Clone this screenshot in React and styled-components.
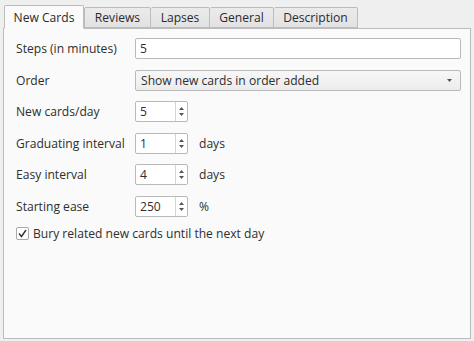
import React from "react";
import styled, { createGlobalStyle } from "styled-components";

const GlobalStyle = createGlobalStyle`
  html, body {
    margin: 0;
    padding: 0;
    background: #efefef;
  }
  body {
    font-family: "Open Sans", "Noto Sans", sans-serif;
    font-size: 12.1px;
    color: #2e2e2e;
  }
`;

const Window = styled.div`
  width: 474px;
  height: 341px;
  box-sizing: border-box;
  padding: 4px 3px 2px 3px;
  display: flex;
  flex-direction: column;
`;

const TabBar = styled.div`
  display: flex;
  align-items: flex-end;
  padding-left: 1px;
  height: 24px;
  position: relative;
  z-index: 1;
`;

const Tab = styled.div`
  box-sizing: border-box;
  height: ${({ active }) => (active ? "24px" : "21px")};
  padding: 0 10px;
  display: flex;
  align-items: center;
  justify-content: center;
  border: 1px solid #bcbcbc;
  border-bottom: ${({ active }) => (active ? "1px solid #fafafa" : "1px solid #bcbcbc")};
  border-left: ${({ first }) => (first ? "1px solid #bcbcbc" : "none")};
  border-radius: 2px 2px 0 0;
  background: ${({ active }) =>
    active ? "#fafafa" : "linear-gradient(#ebebeb, #e2e2e2)"};
  color: #2b2b2b;
  width: ${({ w }) => w}px;
  margin-bottom: ${({ active }) => (active ? "-1px" : "0")};
  white-space: nowrap;
`;

const Pane = styled.div`
  flex: 1;
  box-sizing: border-box;
  border: 1px solid #bcbcbc;
  background: #fafafa;
  padding: 9px 11px 0 11px;
`;

const Form = styled.div`
  display: grid;
  grid-template-columns: 120px auto;
  row-gap: 10.6px;
  align-items: center;
`;

const Label = styled.div`
  height: 21px;
  line-height: 21px;
  padding-left: 1px;
`;

const Field = styled.div`
  display: flex;
  align-items: center;
  gap: 11px;
`;

const TextBox = styled.div`
  box-sizing: border-box;
  width: 326px;
  height: 21px;
  border: 1px solid #b9b9b9;
  border-radius: 2px;
  background: #ffffff;
  padding-left: 4px;
  line-height: 19px;
`;

const Combo = styled.div`
  box-sizing: border-box;
  width: 326px;
  height: 21px;
  border: 1px solid #b9b9b9;
  border-radius: 2px;
  background: linear-gradient(#f7f7f7, #ececec);
  padding: 0 8px 0 5px;
  display: flex;
  align-items: center;
  justify-content: space-between;
`;

const Spin = styled.div`
  box-sizing: border-box;
  width: 53px;
  height: 21px;
  border: 1px solid #b9b9b9;
  border-radius: 2px;
  background: #ffffff;
  display: flex;
`;

const SpinValue = styled.div`
  flex: 1;
  padding-left: 4px;
  line-height: 19px;
`;

const SpinArrows = styled.div`
  width: 11px;
  border-left: 1px solid #d4d4d4;
  display: flex;
  flex-direction: column;
  align-items: center;
  justify-content: center;
  gap: 3px;
`;

const Unit = styled.span`
  color: #2e2e2e;
`;

const CheckRow = styled.div`
  display: flex;
  align-items: center;
  gap: 4px;
  margin-top: 8px;
  padding-left: 1px;
`;

const CheckBox = styled.div`
  box-sizing: border-box;
  width: 13px;
  height: 13px;
  border: 1px solid #a8a8a8;
  border-radius: 2px;
  background: #ffffff;
  display: flex;
  align-items: center;
  justify-content: center;
`;

const Tri = ({ up }) => (
  <svg width="5" height="3" viewBox="0 0 5 3">
    <path d={up ? "M0 3 L2.5 0 L5 3 Z" : "M0 0 L5 0 L2.5 3 Z"} fill="#555" />
  </svg>
);

const SpinBox = ({ value }) => (
  <Spin>
    <SpinValue>{value}</SpinValue>
    <SpinArrows>
      <Tri up />
      <Tri />
    </SpinArrows>
  </Spin>
);

const tabs = [
  { name: "New Cards", w: 80 },
  { name: "Reviews", w: 67 },
  { name: "Lapses", w: 59 },
  { name: "General", w: 64 },
  { name: "Description", w: 84 },
];

export default function App() {
  return (
    <>
      <GlobalStyle />
      <Window>
        <TabBar>
          {tabs.map((t, i) => (
            <Tab key={t.name} active={i === 0} first={i < 2} w={t.w}>
              {t.name}
            </Tab>
          ))}
        </TabBar>
        <Pane>
          <Form>
            <Label>Steps (in minutes)</Label>
            <TextBox>5</TextBox>

            <Label>Order</Label>
            <Combo>
              <span>Show new cards in order added</span>
              <Tri />
            </Combo>

            <Label>New cards/day</Label>
            <Field>
              <SpinBox value="5" />
            </Field>

            <Label>Graduating interval</Label>
            <Field>
              <SpinBox value="1" />
              <Unit>days</Unit>
            </Field>

            <Label>Easy interval</Label>
            <Field>
              <SpinBox value="4" />
              <Unit>days</Unit>
            </Field>

            <Label>Starting ease</Label>
            <Field>
              <SpinBox value="250" />
              <Unit>%</Unit>
            </Field>
          </Form>
          <CheckRow>
            <CheckBox>
              <svg width="9" height="9" viewBox="0 0 9 9">
                <path d="M1 4.5 L3.5 7.5 L8 1" fill="none" stroke="#333" strokeWidth="1.4" />
              </svg>
            </CheckBox>
            <span>Bury related new cards until the next day</span>
          </CheckRow>
        </Pane>
      </Window>
    </>
  );
}
